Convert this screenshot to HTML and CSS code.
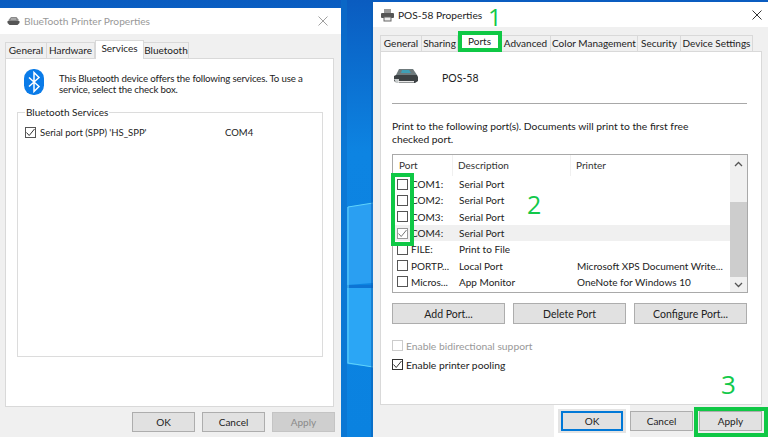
FILE: index.html
```html
<!DOCTYPE html>
<html lang="en">
<head>
<meta charset="utf-8">
<title>Printer Properties</title>
<link rel="stylesheet" href="styles.css">
</head>
<body>
<div class="desktop">
  <svg class="wallpaper" width="768" height="437" viewBox="0 0 768 437" aria-hidden="true">
    <defs>
      <linearGradient id="wall" x1="0" y1="0" x2="0" y2="1">
        <stop offset="0" stop-color="#0a5cc0"/>
        <stop offset="0.35" stop-color="#0d84e2"/>
        <stop offset="1" stop-color="#0a82e0"/>
      </linearGradient>
    </defs>
    <rect width="768" height="437" fill="url(#wall)"/>
    <rect x="341" y="0" width="6" height="437" fill="#0b6fcb" opacity="0.55"/>
    <polygon points="347,207 373,203 373,283 347,285" fill="#2a9ff2"/>
    <polygon points="347,288 373,287 373,367 347,364" fill="#2ba6f5"/>
    <rect x="347" y="285" width="26" height="3" fill="#0d74d4"/>
    <polyline points="373,203 348,207 348,363 373,367" fill="none" stroke="#5fd3fb" stroke-width="1"/>
    <rect x="371" y="0" width="2" height="437" fill="#0a5cb0" opacity="0.5"/>
  </svg>

  <section class="window win-left">
    <header class="titlebar title-left">
      <svg class="title-icon" width="13" height="10" viewBox="0 0 13 10" aria-hidden="true"><path d="M1.5 4 L4 1 H9.5 L11.5 3.500 V7 H1.500 Z" fill="#8a8a8a"/><path d="M0.500 5 H12.500 V7 L10.500 9 H2.500 L0.500 7 Z" fill="#555"/><path d="M4 2.500 H9 V3.500 H4 Z" fill="#c4c4c4"/></svg>
      <span class="title-text muted">BlueTooth Printer Properties</span>
      <svg class="close" width="10" height="10" viewBox="0 0 10 10" aria-hidden="true"><path d="M0.500 0.500 L9.500 9.500 M9.500 0.500 L0.500 9.500" stroke="#a0a0a0" stroke-width="1" fill="none"/></svg>
    </header>
    <div class="tabs tabs-left">
      <span class="tab">General</span>
      <span class="tab">Hardware</span>
      <span class="tab active">Services</span>
      <span class="tab">Bluetooth</span>
    </div>
    <div class="panel panel-left">
      <div class="intro">
        <svg class="bt" width="20" height="26" viewBox="0 0 20 26" aria-hidden="true"><rect x="0" y="0" width="20" height="26" rx="9.500" fill="#0a7be8"/><path d="M5 8.500 L15 17.500 L10 22.500 V3.500 L15 8.500 L5 17.500" fill="none" stroke="#fff" stroke-width="1.500"/></svg>
        <p class="intro-text">This Bluetooth device offers the following services. To use a service, select the check box.</p>
      </div>
      <fieldset class="group">
        <legend class="group-label">Bluetooth Services</legend>
        <div class="service">
          <span class="check"><svg width="11" height="11" viewBox="0 0 11 11" aria-hidden="true"><path d="M1.500 5.500 L4.200 8.500 L9.500 2" fill="none" stroke="#333" stroke-width="1"/></svg></span>
          <span class="service-name">Serial port (SPP) 'HS_SPP'</span>
          <span class="service-port">COM4</span>
        </div>
      </fieldset>
    </div>
    <footer class="actions actions-left">
      <span class="btn">OK</span>
      <span class="btn">Cancel</span>
      <span class="btn disabled">Apply</span>
    </footer>
  </section>

  <section class="window win-right">
    <header class="titlebar title-right">
      <svg class="title-icon" width="15" height="14" viewBox="0 0 15 14" aria-hidden="true"><rect x="4" y="1" width="7" height="4" fill="#999"/><rect x="1" y="5" width="13" height="5" rx="1" fill="#555"/><rect x="4" y="9" width="7" height="4" fill="#eee" stroke="#666" stroke-width="1"/></svg>
      <span class="title-text">POS-58 Properties</span>
      <svg class="close" width="10" height="10" viewBox="0 0 10 10" aria-hidden="true"><path d="M0.500 0.500 L9.500 9.500 M9.500 0.500 L0.500 9.500" stroke="#333" stroke-width="1" fill="none"/></svg>
    </header>
    <div class="tabs tabs-right">
      <span class="tab">General</span>
      <span class="tab">Sharing</span>
      <span class="tab active">Ports</span>
      <span class="tab">Advanced</span>
      <span class="tab">Color Management</span>
      <span class="tab">Security</span>
      <span class="tab">Device Settings</span>
    </div>
    <div class="panel panel-right">
      <div class="printer-head">
        <svg class="printer" width="26" height="17" viewBox="0 0 26 17" aria-hidden="true"><path d="M6 1 H20 L24 7 H3 Z" fill="#6f7a7c"/><path d="M9 2 H16 L18 5 H8 Z" fill="#3f9fb5"/><path d="M1 8 L3 7 H24 L25 9 V13 L22 15 H4 L1 13 Z" fill="#3d4244"/><path d="M1 11 H6 V15 H3 Z" fill="#c8cccc"/><rect x="5" y="13" width="16" height="1.500" fill="#e8e8e8"/></svg>
        <span class="printer-name">POS-58</span>
      </div>
      <hr class="rule">
      <p class="port-intro">Print to the following port(s). Documents will print to the first free checked port.</p>
      <div class="listview">
        <div class="list-main">
          <div class="row head">
            <span class="c1">Port</span><span class="c2">Description</span><span class="c3">Printer</span>
          </div>
          <div class="row"><span class="check"></span><span class="c1b">COM1:</span><span class="c2">Serial Port</span><span class="c3"></span></div>
          <div class="row"><span class="check"></span><span class="c1b">COM2:</span><span class="c2">Serial Port</span><span class="c3"></span></div>
          <div class="row"><span class="check"></span><span class="c1b">COM3:</span><span class="c2">Serial Port</span><span class="c3"></span></div>
          <div class="row selected"><span class="check grey"><svg width="11" height="11" viewBox="0 0 11 11" aria-hidden="true"><path d="M1.500 5.500 L4.200 8.500 L9.500 2" fill="none" stroke="#777" stroke-width="1"/></svg></span><span class="c1b">COM4:</span><span class="c2">Serial Port</span><span class="c3"></span></div>
          <div class="row"><span class="check"></span><span class="c1b">FILE:</span><span class="c2">Print to File</span><span class="c3"></span></div>
          <div class="row"><span class="check"></span><span class="c1b">PORTP...</span><span class="c2">Local Port</span><span class="c3">Microsoft XPS Document Write...</span></div>
          <div class="row"><span class="check"></span><span class="c1b">Micros...</span><span class="c2">App Monitor</span><span class="c3">OneNote for Windows 10</span></div>
        </div>
        <div class="scrollbar">
          <svg class="arrow" width="9" height="6" viewBox="0 0 9 6" aria-hidden="true"><path d="M1 5 L4.500 1.500 L8 5" fill="none" stroke="#555" stroke-width="1.300"/></svg>
          <div class="track"><div class="thumb"></div></div>
          <svg class="arrow" width="9" height="6" viewBox="0 0 9 6" aria-hidden="true"><path d="M1 1 L4.500 4.500 L8 1" fill="none" stroke="#555" stroke-width="1.300"/></svg>
        </div>
      </div>
      <div class="port-buttons">
        <span class="btn wide">Add Port...</span>
        <span class="btn wide">Delete Port</span>
        <span class="btn wide">Configure Port...</span>
      </div>
      <div class="option disabled-option"><span class="check faint"></span><span>Enable bidirectional support</span></div>
      <div class="option"><span class="check dark"><svg width="11" height="11" viewBox="0 0 11 11" aria-hidden="true"><path d="M1.500 5.500 L4.200 8.500 L9.500 2" fill="none" stroke="#333" stroke-width="1"/></svg></span><span>Enable printer pooling</span></div>
    </div>
    <footer class="actions actions-right">
      <span class="ok-halo"><span class="btn default">OK</span></span>
      <span class="btn">Cancel</span>
      <span class="btn">Apply</span>
    </footer>
  </section>

  <div class="mark mark-ports"></div>
  <div class="mark mark-checks"></div>
  <div class="mark mark-apply"></div>
  <span class="num num1">1</span>
  <span class="num num2">2</span>
  <span class="num num3">3</span>
</div>
</body>
</html>
```

FILE: styles.css
```css
* { box-sizing: border-box; }
html, body { margin: 0; padding: 0; }
body { width: 768px; height: 437px; overflow: hidden; font-family: Lato, "Noto Sans", sans-serif; font-size: 10px; color: #222; }
.desktop { position: relative; width: 768px; height: 437px; overflow: hidden; }
.wallpaper { position: absolute; left: 0; top: 0; }

.window { position: absolute; background: #f0f0f0; display: flex; flex-direction: column; }
.win-left { left: 0; top: 8px; width: 341px; height: 429px; }
.win-right { left: 373px; top: 2px; width: 395px; height: 435px; }

.titlebar { background: #fff; height: 26px; display: flex; align-items: center; flex: none; }
.title-left { padding: 0 13px 0 7px; }
.title-right { padding: 0 6px 0 7px; height: 25px; }
.title-icon { flex: none; margin-right: 4px; }
.title-text { font-size: 10.2px; flex: 1; }
.title-right .title-icon { margin-right: 3px; }
.muted { color: #999; }
.close { flex: none; }

.tabs { display: grid; align-items: end; flex: none; height: 24px; }
.tabs-left { grid-template-columns: 42px 48px 49px 45px; padding-left: 5px; }
.tabs-right { grid-template-columns: 42px 36px 43px 50px 87px 43px 72px; padding-left: 7px; }
.tab { height: 16px; border: 1px solid #d9d9d9; border-bottom: 0; border-left-width: 0; background: #f0f0f0; font-size: 10px; line-height: 15px; white-space: nowrap; text-align: center; }
.tab:first-child { border-left-width: 1px; }
.tab.active { height: 19px; background: #fff; border-left-width: 1px; position: relative; margin-bottom: -1px; line-height: 14px; z-index: 1; }

.panel { background: #fff; border: 1px solid #d9d9d9; flex: none; }
.panel-left { margin-left: 5px; width: 329px; height: 349px; padding: 10px 11px 0; }
.panel-right { margin-left: 7px; width: 382px; height: 354px; padding: 14px 7px 0 11px; }

.intro { display: flex; padding-left: 7px; gap: 15px; }
.bt { flex: none; }
.intro-text { margin: 0; font-size: 9.7px; letter-spacing: -0.15px; line-height: 11px; padding-top: 4px; width: 250px; }

.group { margin: 12px 0 0; border: 1px solid #dcdcdc; width: 306px; height: 250px; padding: 3px 7px; min-width: 0; }
.group-label { font-size: 10px; padding: 0 1px; margin-left: 0; line-height: 11px; }
.service { display: flex; align-items: center; font-size: 9.5px; margin-top: 6px; }
.service-name { width: 185px; margin-left: 4px; }

.check { width: 11px; height: 11px; border: 1px solid #555; background: #fff; display: inline-flex; flex: none; align-items: center; justify-content: center; }
.check svg { flex: none; }
.check.grey { border-color: #999; }
.check.faint { border-color: #ccc; }
.check.dark { border-color: #333; }

.printer-head { display: flex; align-items: center; height: 24px; padding-left: 1px; }
.printer { flex: none; margin-top: -4px; }
.printer-name { margin-left: 23px; font-size: 10.5px; }
.rule { border: 0; border-top: 1px solid #a8a8a8; margin: 13px 0 0; width: 355px; }
.port-intro { margin: 16px 0 0; font-size: 10.3px; line-height: 13px; width: 305px; }

.listview { display: flex; margin-top: 8px; width: 356px; height: 139px; border: 1px solid #a9a9a9; background: #fff; }
.list-main { flex: 1; min-width: 0; }
.row { display: flex; align-items: center; height: 16.3px; padding-left: 4px; font-size: 10px; white-space: nowrap; }
.row.head { height: 21px; padding-left: 0; color: #333; }
.row.selected { background: #f0f0f0; }
.row .check { margin-right: 3px; }
.c1 { width: 60px; padding-left: 6px; border-right: 1px solid #f0f0f0; height: 21px; line-height: 21px; }
.c1b { width: 43px; overflow: hidden; }
.c2 { width: 118px; padding-left: 5px; }
.head .c2 { border-right: 1px solid #f0f0f0; height: 21px; line-height: 21px; }
.c3 { padding-left: 5px; flex: 1; }
.head .c3 { height: 21px; line-height: 21px; }

.scrollbar { width: 17px; flex: none; background: #f0f0f0; display: flex; flex-direction: column; align-items: center; padding: 6px 0 4px; }
.track { flex: 1; width: 100%; margin: 2px 0; display: flex; flex-direction: column; justify-content: flex-end; padding-bottom: 3px; }
.thumb { height: 75px; background: #cdcdcd; width: 100%; }
.arrow { flex: none; }

.port-buttons { display: flex; justify-content: space-between; width: 355px; margin-top: 10px; }
.btn { display: inline-flex; align-items: center; justify-content: center; height: 20px; width: 63px; background: #e1e1e1; border: 1px solid #adadad; font-size: 10px; color: #222; }
.btn.wide { width: 113px; height: 21px; font-size: 10.5px; }
.btn.disabled { background: #cfcfcf; border-color: #c4c4c4; color: #8a8a8a; }
.btn.default { border: 2px solid #0078d7; height: 20px; width: 62px; }
.ok-halo { background: #e4e4e4; padding: 2px 3px; display: inline-flex; box-shadow: 0 0 0 4px #fff; margin-right: -2px; }

.option { display: flex; align-items: center; gap: 3px; font-size: 10.3px; margin-top: 6px; height: 13px; }
.disabled-option { color: #999; margin-top: 15px; }

.actions { display: flex; flex: 1; align-items: center; }
.actions-left { justify-content: flex-end; gap: 7px; padding-right: 6px; }
.actions-right { justify-content: flex-end; gap: 6px; padding-right: 6px; }

.mark { position: absolute; border: 4px solid #0fc845; z-index: 2; }
.mark-ports { left: 458px; top: 31px; width: 44px; height: 21px; }
.mark-checks { left: 391px; top: 173px; width: 23px; height: 73px; }
.mark-apply { left: 694px; top: 407px; width: 74px; height: 30px; }
.num { position: absolute; color: #12c94a; font-family: "Open Sans", sans-serif; line-height: 1; z-index: 2; }
.num1 { left: 488px; top: 5px; font-size: 24px; }
.num2 { left: 527px; top: 192px; font-size: 25px; }
.num3 { left: 721px; top: 371px; font-size: 26px; }
```
